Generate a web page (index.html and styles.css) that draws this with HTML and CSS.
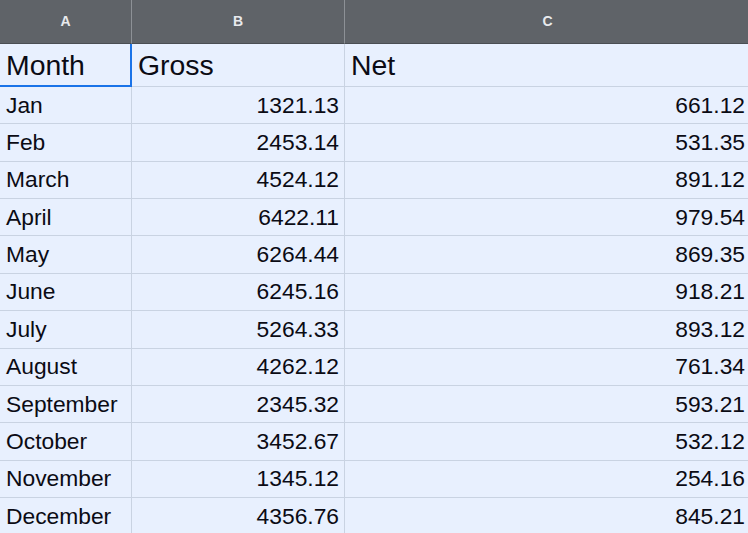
FILE: index.html
```html
<!DOCTYPE html>
<html>
<head>
<meta charset="utf-8">
<link rel="stylesheet" href="styles.css">
</head>
<body>
<div class="sheet">
  <div class="colhead">A</div><div class="colhead">B</div><div class="colhead">C</div>
  <div class="cell title sel">Month</div><div class="cell title">Gross</div><div class="cell title">Net</div>
  <div class="cell">Jan</div><div class="cell num">1321.13</div><div class="cell num">661.12</div>
  <div class="cell">Feb</div><div class="cell num">2453.14</div><div class="cell num">531.35</div>
  <div class="cell">March</div><div class="cell num">4524.12</div><div class="cell num">891.12</div>
  <div class="cell">April</div><div class="cell num">6422.11</div><div class="cell num">979.54</div>
  <div class="cell">May</div><div class="cell num">6264.44</div><div class="cell num">869.35</div>
  <div class="cell">June</div><div class="cell num">6245.16</div><div class="cell num">918.21</div>
  <div class="cell">July</div><div class="cell num">5264.33</div><div class="cell num">893.12</div>
  <div class="cell">August</div><div class="cell num">4262.12</div><div class="cell num">761.34</div>
  <div class="cell">September</div><div class="cell num">2345.32</div><div class="cell num">593.21</div>
  <div class="cell">October</div><div class="cell num">3452.67</div><div class="cell num">532.12</div>
  <div class="cell">November</div><div class="cell num">1345.12</div><div class="cell num">254.16</div>
  <div class="cell">December</div><div class="cell num">4356.76</div><div class="cell num">845.21</div>
</div>
</body>
</html>
```
FILE: styles.css
```css
html, body {
  margin: 0;
  padding: 0;
  background: #e8f0fe;
  overflow: hidden;
}
.sheet {
  display: grid;
  grid-template-columns: 132px 213px 406px;
  grid-template-rows: 44px 43px repeat(12, 37.36px);
  font-family: "Liberation Sans", Arial, sans-serif;
  color: #0b0b14;
  width: 751px;
}
.colhead {
  background: #5f6368;
  color: #e8eaed;
  font-size: 14px;
  font-weight: bold;
  display: flex;
  align-items: center;
  justify-content: center;
  padding-bottom: 2px;
  border-right: 1px solid #8d9196;
  border-bottom: 1px solid #4a4e53;
  box-sizing: border-box;
}
.cell {
  background: #e8f0fe;
  border-right: 1px solid #c9d3e2;
  border-bottom: 1px solid #c9d3e2;
  box-sizing: border-box;
  font-size: 22.8px;
  display: flex;
  align-items: center;
  padding: 0 5px 0 6px;
  white-space: nowrap;
  overflow: hidden;
}
.title {
  font-size: 28.4px;
  padding-top: 1px;
}
.num {
  justify-content: flex-end;
}
.sel {
  border-right: 2px solid #1a73e8;
  border-bottom: 2px solid #1a73e8;
}
```
